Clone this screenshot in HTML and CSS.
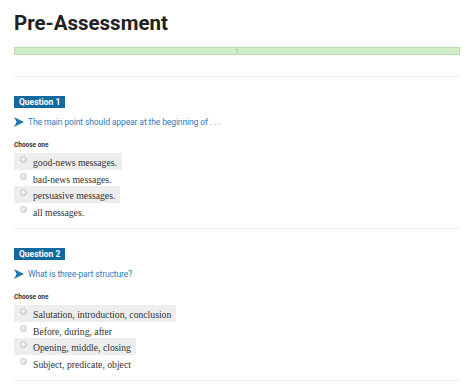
FILE: index.html
```html
<!DOCTYPE html>
<html lang="en">
<head>
    <meta charset="UTF-8">
    <title>Pre-Assessment</title>
    <link rel="stylesheet" href="styles.css">
</head>
<body>
    <div class="page">
        <h1 class="title">Pre-Assessment</h1>
        <div class="progress"><span>1</span></div>

        <div class="question">
            <div class="badge">Question 1</div>
            <div class="prompt">
                <svg class="arrow" viewBox="0 0 10 10" width="10" height="10"><path d="M0 0 L10 5 L0 10 L2.6 5 Z" fill="#1f74b0"/></svg>
                <span>The main point should appear at the beginning of . . .</span>
            </div>
            <div class="choose">Choose one</div>
            <ul class="options">
                <li class="shade"><span class="radio"></span>good-news messages.</li>
                <li><span class="radio"></span>bad-news messages.</li>
                <li class="shade"><span class="radio"></span>persuasive messages.</li>
                <li><span class="radio"></span>all messages.</li>
            </ul>
        </div>

        <div class="question">
            <div class="badge">Question 2</div>
            <div class="prompt">
                <svg class="arrow" viewBox="0 0 10 10" width="10" height="10"><path d="M0 0 L10 5 L0 10 L2.6 5 Z" fill="#1f74b0"/></svg>
                <span>What is three-part structure?</span>
            </div>
            <div class="choose">Choose one</div>
            <ul class="options">
                <li class="shade"><span class="radio"></span>Salutation, introduction, conclusion</li>
                <li><span class="radio"></span>Before, during, after</li>
                <li class="shade"><span class="radio"></span>Opening, middle, closing</li>
                <li><span class="radio"></span>Subject, predicate, object</li>
            </ul>
        </div>
    </div>
</body>
</html>
```

FILE: styles.css
```css
body {
    margin: 0;
    background-color: #fff;
    font-family: Roboto, 'Liberation Sans', sans-serif;
}

.page {
    padding: 11px 14px 0 14px;
}

.title {
    margin: 0;
    font-size: 20.5px;
    line-height: 25px;
    font-weight: 700;
    color: #212121;
}

.progress {
    margin-top: 11px;
    margin-bottom: 21px;
    height: 6px;
    background-color: #d3edc9;
    border: 1px solid #b9dbac;
    display: flex;
    align-items: center;
    justify-content: center;
}

.progress span {
    font-size: 5px;
    line-height: 6px;
    color: #8aa884;
}

.question {
    border-top: 1px solid #ececec;
    padding: 19px 0 9px 0;
}

.question:last-child {
    border-bottom: 1px solid #ececec;
}

.badge {
    width: fit-content;
    white-space: nowrap;
    background-color: #11699f;
    color: #fff;
    font-size: 8.5px;
    font-weight: 700;
    line-height: 12px;
    padding: 0 5px;
}

.prompt {
    display: flex;
    align-items: center;
    margin-top: 9px;
    color: #2f7db8;
    font-size: 8.6px;
    letter-spacing: -0.15px;
    line-height: 10px;
}

.arrow {
    margin-right: 4px;
    flex-shrink: 0;
}

.choose {
    margin-top: 14px;
    font-size: 6.5px;
    font-weight: 700;
    color: #333;
    line-height: 8px;
}

.options {
    list-style: none;
    margin: 4px 0 0 0;
    padding: 0;
}

.options li {
    display: flex;
    align-items: flex-start;
    width: fit-content;
    padding: 2px 5px 0 6px;
    height: 14.5px;
    font-family: 'Liberation Serif', serif;
    font-size: 9.7px;
    line-height: 16px;
    color: #333;
}

.options li.shade {
    background-color: #ededed;
}

.radio {
    width: 5px;
    height: 5px;
    border-radius: 50%;
    border: 1px solid #c8c8c8;
    background: radial-gradient(circle at 40% 35%, #f6f6f6, #d6d6d6);
    margin-right: 6px;
    margin-top: 1px;
    flex-shrink: 0;
}
```
